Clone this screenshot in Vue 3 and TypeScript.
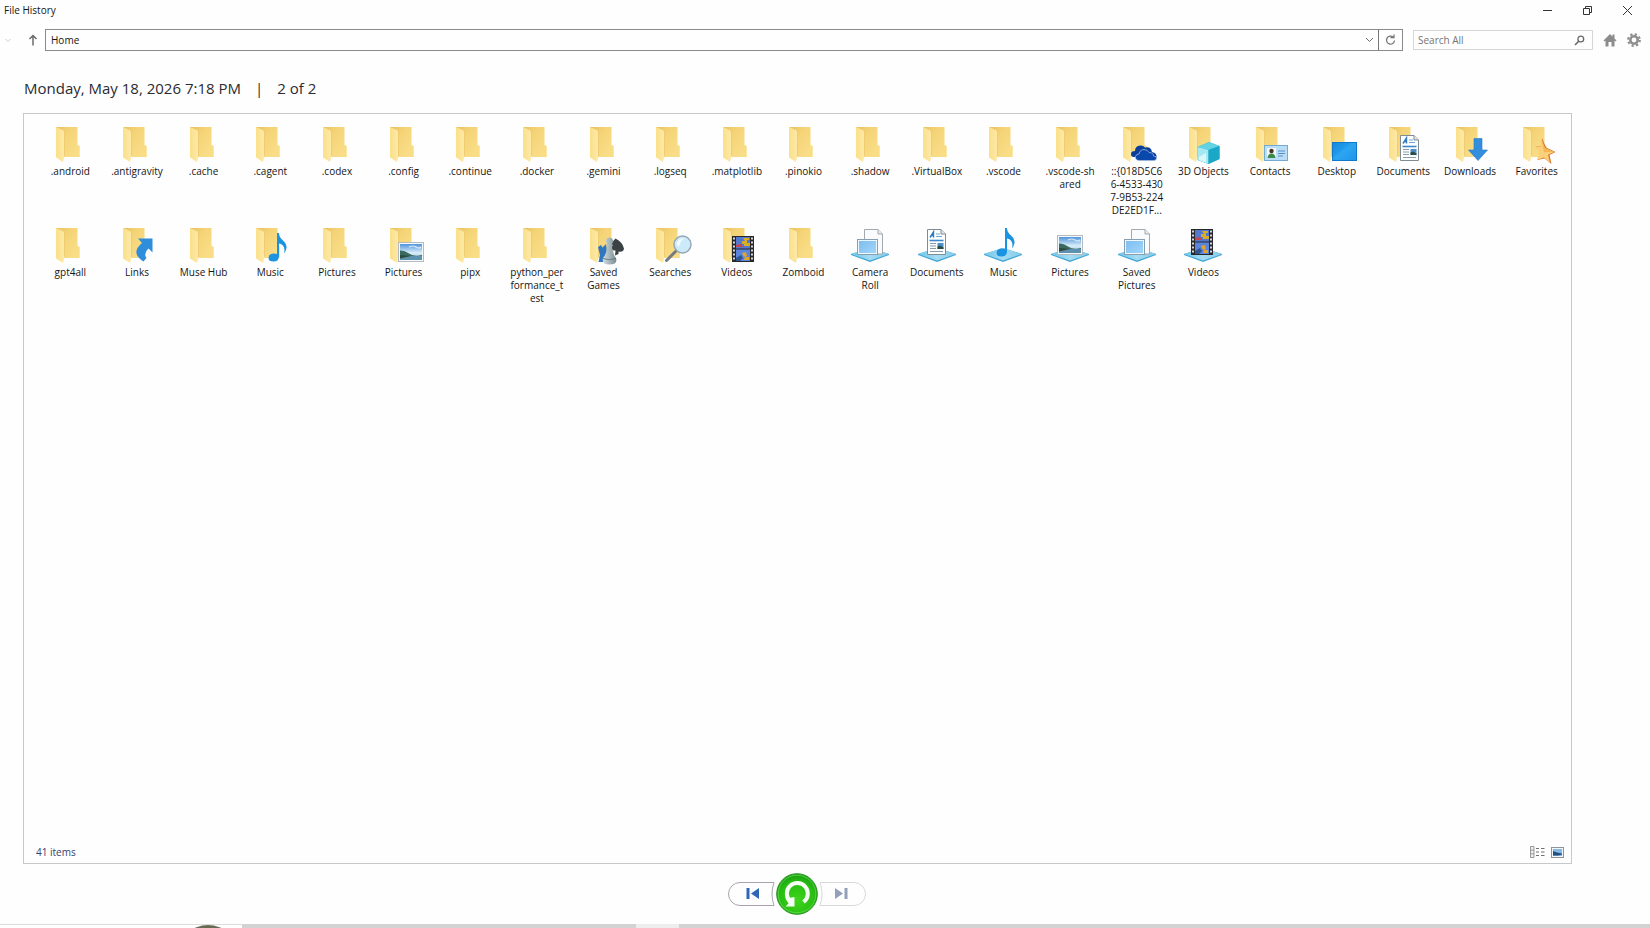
<script setup lang="ts">
import { ref } from 'vue'

interface Entry {
  name: string
  kind: 'folder' | 'library'
  glyph?: string
}

const folder = (name: string, glyph?: string): Entry => ({ name, kind: 'folder', glyph })
const library = (name: string, glyph: string): Entry => ({ name, kind: 'library', glyph })

const entries: Entry[] = [
  folder('.android'),
  folder('.antigravity'),
  folder('.cache'),
  folder('.cagent'),
  folder('.codex'),
  folder('.config'),
  folder('.continue'),
  folder('.docker'),
  folder('.gemini'),
  folder('.logseq'),
  folder('.matplotlib'),
  folder('.pinokio'),
  folder('.shadow'),
  folder('.VirtualBox'),
  folder('.vscode'),
  folder('.vscode-sh\nared'),
  folder('::{018D5C6\n6-4533-430\n7-9B53-224\nDE2ED1F...', 'cloud'),
  folder('3D Objects', 'cube'),
  folder('Contacts', 'contact'),
  folder('Desktop', 'desktop'),
  folder('Documents', 'document'),
  folder('Downloads', 'download'),
  folder('Favorites', 'star'),
  folder('gpt4all'),
  folder('Links', 'link'),
  folder('Muse Hub'),
  folder('Music', 'note'),
  folder('Pictures'),
  folder('Pictures', 'picture'),
  folder('pipx'),
  folder('python_per\nformance_t\nest'),
  folder('Saved\nGames', 'games'),
  folder('Searches', 'search'),
  folder('Videos', 'film'),
  folder('Zomboid'),
  library('Camera\nRoll', 'frames'),
  library('Documents', 'document'),
  library('Music', 'note'),
  library('Pictures', 'picture'),
  library('Saved\nPictures', 'frames'),
  library('Videos', 'film'),
]

// Top-left corner and size of each glyph inside the 40x40 icon, per kind.
const folderBox: Record<string, number[]> = {
  cloud: [14, 20, 26, 16],
  cube: [14, 17, 23, 22],
  contact: [14, 20, 24, 16],
  desktop: [15, 17, 25, 19],
  document: [17, 10, 19, 26],
  download: [18, 13, 20, 23],
  star: [18, 13, 21, 26],
  link: [18, 12, 18, 24],
  note: [18, 7, 19, 29],
  picture: [14, 16, 26, 20],
  games: [14, 11, 26, 28],
  search: [15, 9, 27, 27],
  film: [15, 10, 22, 26],
}
const libraryBox: Record<string, number[]> = {
  frames: [7, 3, 26, 26],
  document: [10, 3, 19, 26],
  note: [13, 2, 19, 29],
  picture: [7, 9, 26, 20],
  film: [8, 3, 22, 26],
}

const box = (e: Entry) => (e.kind === 'folder' ? folderBox : libraryBox)[e.glyph ?? ''] ?? [0, 0, 0, 0]

const path = ref('Home')
const query = ref('')
</script>

<template>
  <div class="window">
    <svg class="sprite" width="0" height="0" aria-hidden="true">
      <defs>
        <linearGradient id="gBack" x1="0" y1="0" x2="1" y2="1">
          <stop offset="0" stop-color="#e8c15f" />
          <stop offset="0.35" stop-color="#f5d477" />
          <stop offset="1" stop-color="#fae08c" />
        </linearGradient>
        <linearGradient id="gLeaf" x1="0" y1="0" x2="1" y2="0">
          <stop offset="0" stop-color="#fbe08a" />
          <stop offset="1" stop-color="#fde9a8" />
        </linearGradient>
        <linearGradient id="gBase" x1="0" y1="0" x2="1" y2="0">
          <stop offset="0" stop-color="#6fc6ea" />
          <stop offset="0.5" stop-color="#a5dcf3" />
          <stop offset="1" stop-color="#7fcbea" />
        </linearGradient>
        <linearGradient id="gDesk" x1="0" y1="0" x2="1" y2="1">
          <stop offset="0" stop-color="#1487dd" />
          <stop offset="0.5" stop-color="#24a0ee" />
          <stop offset="1" stop-color="#1186e0" />
        </linearGradient>
        <linearGradient id="gSky" x1="0" y1="0" x2="0" y2="1">
          <stop offset="0" stop-color="#4f95dc" />
          <stop offset="0.55" stop-color="#d9edf8" />
          <stop offset="1" stop-color="#9cc4dc" />
        </linearGradient>
        <linearGradient id="gFrame" x1="0" y1="0" x2="1" y2="1">
          <stop offset="0" stop-color="#7fbeef" />
          <stop offset="1" stop-color="#a0d5fa" />
        </linearGradient>
        <linearGradient id="gPawn" x1="0" y1="0" x2="1" y2="0">
          <stop offset="0" stop-color="#d3dfe1" />
          <stop offset="1" stop-color="#778b91" />
        </linearGradient>
        <radialGradient id="gGreen" cx="0.5" cy="0.65" r="0.6">
          <stop offset="0" stop-color="#3ed51b" />
          <stop offset="0.75" stop-color="#27bd12" />
          <stop offset="1" stop-color="#1ba412" />
        </radialGradient>
      </defs>

      <symbol id="base-folder" viewBox="0 0 40 40">
        <path d="M6 2H27.500V20L29.500 21V32H13Z" fill="url(#gBack)" />
        <path d="M26 20l3.500 1v11H26z" fill="#f9dd84" />
        <path d="M6 2L13.500 5.500Q14.500 6 14.500 8V31L13 37L6.800 33Q6 32.500 6 31.500Z" fill="url(#gLeaf)" />
        <path d="M13.500 5.500Q14.500 6 14.500 8V31" fill="none" stroke="#edc869" stroke-width="0.800" />
      </symbol>
      <symbol id="base-library" viewBox="0 0 40 40">
        <path d="M1 28L20 22L39 28V29L20 36L1 29Z" fill="#43a6d3" />
        <path d="M1 28L20 22L39 28L20 34.500Z" fill="url(#gBase)" />
      </symbol>

      <symbol id="g-cloud" viewBox="0 0 26 16">
        <path d="M3 12Q0 12 0 9Q0 6 4 6Q4 1 9 0.500Q12 0 14 2.500Q20 1 21 7Q26 8 25.500 12Z" fill="#0a3f9c" />
        <path d="M8 15.500Q4 15 4.500 11.500Q5 9 8 9Q9 4.500 13 4.500Q16.500 4.500 18 7.500Q22.500 7.500 22.500 11Q26 11 25.500 13.500Q25 15.500 23 15.500Z" fill="#0b48ab" stroke="#9cb8df" stroke-width="0.800" />
      </symbol>
      <symbol id="g-cube" viewBox="0 0 23 22">
        <path d="M12 0L22.500 4V17L11.500 22L0.500 18V5Z" fill="#25b4cf" />
        <path d="M12 0L22.500 4L11.500 8L0.500 5Z" fill="#63d3e4" />
        <path d="M0.500 5L11.500 8V22L0.500 18Z" fill="#a4e8f2" />
        <path d="M2 15L9 11V20.500L2 18Z" fill="#d9f7fa" />
        <path d="M11.500 8L22.500 4V17L11.500 22Z" fill="#1ba7c6" />
      </symbol>
      <symbol id="g-contact" viewBox="0 0 24 16">
        <rect x="0.500" y="0.500" width="23" height="15" fill="#b9def6" stroke="#74abd2" />
        <rect x="3" y="3" width="9" height="10" fill="#f3f8f6" />
        <circle cx="7.500" cy="6" r="2.200" fill="#4a3528" />
        <path d="M3.500 13Q4 8.500 7.500 8.500Q11 8.500 11.500 13Z" fill="#3c8b48" />
        <path d="M14 6h7M14 8.500h7M14 11h5" stroke="#5a8fc8" stroke-width="1" />
      </symbol>
      <symbol id="g-desktop" viewBox="0 0 25 19">
        <rect x="0.500" y="0.500" width="24" height="18" fill="url(#gDesk)" stroke="#1179cb" />
        <path d="M1 16L18 1H24V18H1Z" fill="#36adf4" opacity="0.400" />
      </symbol>
      <symbol id="g-document" viewBox="0 0 19 26">
        <path d="M0.500 0.500H14L18.500 5V25.500H0.500Z" fill="#fdfefe" stroke="#808b93" />
        <path d="M14 0.500V5H18.500" fill="#e1e5e8" stroke="#808b93" />
        <path d="M3 8.500L6.500 3V8.500M4.500 6.500H6.500" fill="none" stroke="#2f7ac1" stroke-width="1.400" />
        <path d="M9 5h4M9 7.500h6" stroke="#6ba8df" />
        <path d="M2.500 11.500h14" stroke="#3f87cc" stroke-width="1.600" />
        <path d="M3 14.500h6M3 17h6M3 19.500h6M3 22.500h13" stroke="#8c9aa5" />
        <rect x="10.500" y="14" width="6" height="6" fill="#4d8ec8" />
        <path d="M10.500 20V17.500L13 16.500L16.500 18.500V20Z" fill="#2c4e42" />
      </symbol>
      <symbol id="g-download" viewBox="0 0 20 23">
        <path d="M6 0.500H14V12H19.500L10 22.500L0.500 12H6Z" fill="#338fdd" stroke="#2379c5" stroke-width="0.600" />
      </symbol>
      <symbol id="g-star" viewBox="0 0 21 26">
        <path d="M7 0L11 9.500L20.500 14L14.500 17L16.500 26L9.500 20.500L2.500 22L5 14L0.500 8.500L6.500 8.500Z" fill="#d8742c" />
        <path d="M6.500 1L9.800 10L19 14L13 16.800L15 25L9 19.500L2 22L4.500 14L0 8.500L6 8.800Z" fill="#fad07a" />
        <path d="M6.500 1L9.800 10L19 14L9 14Z" fill="#f4b552" />
      </symbol>
      <symbol id="g-link" viewBox="0 0 18 24">
        <path d="M3 0.500H17.500V14.500L13.500 10.500Q8.500 15 11.500 20L8.500 23.500Q-5 15 7 5Z" fill="#2f8edb" />
        <path d="M13.500 11Q9 15 11 19.500L17 18Q17 14 13.500 11Z" fill="#f7fbfe" />
      </symbol>
      <symbol id="g-note" viewBox="0 0 19 29">
        <path d="M9 0H11Q11 4 14.500 7Q19 11 18.500 15Q18 18 16 20.500Q18 12 11 10.500V23Q11 28.500 5.500 28.500Q0.500 28.500 0.500 25Q0.500 20.500 6 20.500Q8 20.500 9 21Z" fill="#1b93e0" />
      </symbol>
      <symbol id="g-picture" viewBox="0 0 26 20">
        <rect x="0.500" y="0.500" width="25" height="19" fill="#f7fafc" stroke="#b4babf" />
        <rect x="2" y="2" width="22" height="16" fill="url(#gSky)" />
        <path d="M2 8.500Q6 8 11 11.500T24 13V14H2Z" fill="#3b6a62" />
        <path d="M2 14H24V18H2Z" fill="#5d92ae" />
        <path d="M2 13L13 14L2 16.500Z" fill="#2d4a3d" />
        <path d="M11 5q4-2 7 0t5 0" fill="none" stroke="#fff" stroke-width="1.200" opacity="0.700" />
      </symbol>
      <symbol id="g-games" viewBox="0 0 26 28">
        <path d="M0 10L3 8L4.500 10.500L8 7L9.500 17L7 25H0.500L2 18Z" fill="#2f78bf" />
        <path d="M17.500 1.500Q13 6 13 10.500Q14 14 17.500 13.500L17 18.500L20.500 17L20.500 14.500Q25.500 15.500 26 11.500Q24.500 5 17.500 1.500Z" fill="#3b4144" />
        <path d="M11.500 0.500A3.500 3.500 0 0 1 14 6.500L15 8.500L14 10Q14.500 17 18 21Q20 27.500 11.500 27.500Q3.500 27.500 5 21Q8.500 17 9 10L8 8.500L9 6.500A3.500 3.500 0 0 1 11.500 0.500Z" fill="url(#gPawn)" />
        <path d="M5 21.500Q11 24 18 21.500" fill="none" stroke="#5b7077" stroke-width="0.800" />
      </symbol>
      <symbol id="g-search" viewBox="0 0 27 27">
        <path d="M1.500 25.500L11 16" stroke="#757b80" stroke-width="3" stroke-linecap="round" />
        <circle cx="17.500" cy="9.500" r="8.500" fill="#cdeafa" stroke="#94a6b1" stroke-width="1.400" />
        <path d="M11.500 9Q13 3 19 3.500Q15 6 14 12Z" fill="#f2fbff" />
      </symbol>
      <symbol id="g-film" viewBox="0 0 22 26">
        <rect width="22" height="26" fill="#28282b" />
        <rect x="4" y="1" width="14" height="11.500" fill="#5378cd" />
        <rect x="4" y="13.500" width="14" height="11.500" fill="#5b85dc" />
        <path d="M11 2h6v2h-2v3h3v3h-6V8h-2V5h3z" fill="#d9ae24" />
        <path d="M4 9l5-1 2 3H4z" fill="#c64350" />
        <path d="M10 17l4-1 1 4-3 1zM13 21h4v3h-5z" fill="#e1a629" />
        <path d="M4 22l5-3 2 3-3 3H4z" fill="#31538f" />
        <path d="M2 1.500V25M20 1.500V25" stroke="#d4d7de" stroke-width="2" stroke-dasharray="2 2" />
      </symbol>
      <symbol id="g-frames" viewBox="0 0 26 26">
        <path d="M7.500 0.500H21L25.500 5V25H7.500Z" fill="#fafbfc" stroke="#a3a9ae" />
        <path d="M21 0.500V5H25.500" fill="#e9ebed" stroke="#a3a9ae" />
        <rect x="0.500" y="10.500" width="20" height="15" fill="#eef7fd" stroke="#879fb0" />
        <rect x="2" y="12" width="17" height="12" fill="url(#gFrame)" />
      </symbol>
    </svg>

    <header class="titlebar">
      <h1 class="caption">File History</h1>
      <div class="controls">
        <button type="button" aria-label="Minimize">
          <svg width="11" height="11" viewBox="0 0 11 11"><path d="M1 5.500h9" /></svg>
        </button>
        <button type="button" aria-label="Restore">
          <svg width="11" height="11" viewBox="0 0 11 11"><path d="M1.500 3.500h6v6h-6zM3.500 3.500v-2h6v6h-2" /></svg>
        </button>
        <button type="button" aria-label="Close">
          <svg width="11" height="11" viewBox="0 0 11 11"><path d="M1 1l9 9M10 1l-9 9" /></svg>
        </button>
      </div>
    </header>

    <nav class="toolbar">
      <button class="plain recent" type="button" aria-label="Recent locations">
        <svg width="8" height="8" viewBox="0 0 8 8"><path d="M1.500 3l2.500 2.500L6.500 3" fill="none" stroke="#d0d0d0" /></svg>
      </button>
      <button class="plain up" type="button" aria-label="Up">
        <svg width="10" height="12" viewBox="0 0 10 12"><path d="M5 11.500V1.500M1.500 5L5 1.500L8.500 5" fill="none" stroke="#6b6b6b" stroke-width="1.500" /></svg>
      </button>
      <div class="address">
        <input v-model="path" type="text" aria-label="Address" />
        <button class="plain drop" type="button" aria-label="Previous locations">
          <svg width="9" height="8" viewBox="0 0 9 8"><path d="M1 2l3.500 3.500L8 2" fill="none" stroke="#6b6b6b" /></svg>
        </button>
        <button class="plain refresh" type="button" aria-label="Refresh">
          <svg width="11" height="12" viewBox="0 0 11 12">
            <path d="M8.200 3.200A4 4 0 1 0 9.500 6.500" fill="none" stroke="#777" stroke-width="1.300" />
            <path d="M5.500 3.500h3.500V0.500" fill="none" stroke="#777" stroke-width="1.300" />
          </svg>
        </button>
      </div>
      <div class="search">
        <input v-model="query" type="text" placeholder="Search All" aria-label="Search All" />
        <button class="plain find" type="button" aria-label="Search">
          <svg width="11" height="11" viewBox="0 0 11 11">
            <circle cx="6.800" cy="4" r="2.900" fill="none" stroke="#686868" stroke-width="1.300" />
            <path d="M4.700 6.200L1 10" stroke="#686868" stroke-width="1.600" />
          </svg>
        </button>
      </div>
      <button class="plain tool" type="button" aria-label="Home">
        <svg width="14" height="14" viewBox="0 0 14 14"><path d="M7 1L0.500 7.500L1.500 8.500L2.500 7.600V13.500H5.500V9H8.500V13.500H11.500V7.600L12.500 8.500L13.500 7.500L11.500 5.500V1.500H9.500V3.500Z" fill="#8c8c8c" /></svg>
      </button>
      <button class="plain tool" type="button" aria-label="Options">
        <svg width="14" height="14" viewBox="0 0 14 14">
          <circle cx="7" cy="7" r="3.700" fill="none" stroke="#8f8f8f" stroke-width="2.600" />
          <circle cx="7" cy="7" r="5.800" fill="none" stroke="#8f8f8f" stroke-width="2.200" stroke-dasharray="2.278 2.278" />
        </svg>
      </button>
    </nav>

    <h2 class="stamp"><span>Monday, May 18, 2026 7:18 PM</span><span>|</span><span>2 of 2</span></h2>

    <main class="panel">
      <ul class="grid">
        <li v-for="(entry, i) in entries" :key="i">
          <button class="tile" type="button">
            <svg class="icon" width="40" height="40" viewBox="0 0 40 40" aria-hidden="true">
              <use :href="'#base-' + entry.kind" width="40" height="40" />
              <use
                v-if="entry.glyph"
                :href="'#g-' + entry.glyph"
                :x="box(entry)[0]"
                :y="box(entry)[1]"
                :width="box(entry)[2]"
                :height="box(entry)[3]"
              />
            </svg>
            <span class="label">{{ entry.name }}</span>
          </button>
        </li>
      </ul>
      <footer class="status">
        <span>{{ entries.length }} items</span>
        <div class="views">
          <button class="plain" type="button" aria-label="Details view">
            <svg width="15" height="12" viewBox="0 0 15 12">
              <path d="M0.500 0.500h3.500v11H0.500zM0.500 4.200H4M0.500 7.800H4" fill="#eee" stroke="#999" />
              <path d="M6 2.500h3M11 2.500h3.500M6 6h3M11 6h3.500M6 9.500h3M11 9.500h3.500" stroke="#707070" />
            </svg>
          </button>
          <button class="plain" type="button" aria-label="Large icons view">
            <svg width="13" height="11" viewBox="0 0 13 11">
              <rect x="0.500" y="0.500" width="12" height="10" fill="#f4f7fa" stroke="#8e9499" />
              <rect x="2" y="2" width="9" height="7" fill="#86b9e6" />
              <path d="M2 4L6 5.500L11 6.500V7.500L7 8.500H2Z" fill="#244f7f" />
            </svg>
          </button>
        </div>
      </footer>
    </main>

    <div class="player">
      <button class="plain" type="button" aria-label="Previous version">
        <svg width="47" height="24" viewBox="0 0 47 24">
          <path d="M12 0.500H46Q42 12 46 23.500H12A11.500 11.500 0 0 1 12 0.500Z" fill="#fefefe" stroke="#aaa2ae" />
          <path d="M18.500 6h3v11h-3zM31 6v11l-8-5.500z" fill="#2e68b4" />
        </svg>
      </button>
      <button class="plain" type="button" aria-label="Restore to original location">
        <svg width="42" height="42" viewBox="0 0 42 42">
          <circle cx="21" cy="21" r="20.300" fill="url(#gGreen)" stroke="#27901f" />
          <circle cx="21" cy="21" r="18.800" fill="none" stroke="#62d951" stroke-width="0.800" />
          <path d="M14.500 28.500A10.500 10.500 0 1 1 27.500 29" fill="none" stroke="#f6fdf4" stroke-width="4" />
          <path d="M9.500 25.500L18.500 24V33.500H9.500L12.500 30.500Z" fill="#f6fdf4" />
        </svg>
      </button>
      <button class="plain" type="button" aria-label="Next version" disabled>
        <svg width="47" height="24" viewBox="0 0 47 24">
          <path d="M35 0.500H1Q5 12 1 23.500H35A11.500 11.500 0 0 0 35 0.500Z" fill="#fefefe" stroke="#d8d8da" />
          <path d="M25.500 6h3v11h-3zM16 6v11l8-5.500z" fill="#93a0b9" />
        </svg>
      </button>
    </div>

    <div class="edge" aria-hidden="true">
      <div class="edge-light"><i class="disc"></i></div>
      <div class="edge-mid"></div>
      <div class="edge-tab"></div>
      <div class="edge-rest"></div>
    </div>
  </div>
</template>

<style>
body {
  background: #fefefe;
}
</style>

<style scoped>
.window {
  position: relative;
  display: flex;
  flex-direction: column;
  min-height: 100vh;
  overflow: hidden;
  background: #fefefe;
  color: #151515;
  font-family: 'Open Sans', 'Noto Sans', sans-serif;
  font-size: 10px;
}
.window * {
  box-sizing: border-box;
}
.sprite {
  position: absolute;
}
button,
input {
  margin: 0;
  padding: 0;
  border: 0;
  background: none;
  color: inherit;
  font: inherit;
}
button svg {
  display: block;
}
.plain {
  display: flex;
  align-items: center;
  justify-content: center;
}

.titlebar {
  display: flex;
  align-items: center;
  justify-content: space-between;
  height: 20px;
  padding: 0 3px 0 4px;
}
.caption {
  margin: 0;
  font-size: 10px;
  font-weight: 400;
  line-height: 20px;
}
.controls {
  display: flex;
}
.controls button {
  display: flex;
  align-items: center;
  justify-content: center;
  width: 40px;
  height: 18px;
}
.controls path {
  fill: none;
  stroke: #333;
  stroke-width: 1;
}

.toolbar {
  display: flex;
  align-items: center;
  height: 22px;
  margin-top: 9px;
  padding-right: 9px;
}
.recent {
  width: 16px;
  height: 22px;
}
.up {
  width: 29px;
  height: 22px;
  padding-left: 4px;
}
.address {
  display: flex;
  flex: 1;
  height: 22px;
  border: 1px solid #8b8b8b;
}
.address input {
  flex: 1;
  min-width: 0;
  padding-left: 5px;
}
.drop {
  width: 17px;
}
.refresh {
  width: 24px;
  border-left: 1px solid #777;
}
.search {
  display: flex;
  width: 180px;
  height: 20px;
  margin: 0 10px;
  border: 1px solid #d6d6d6;
}
.search input {
  flex: 1;
  min-width: 0;
  padding-left: 4px;
}
.search input::placeholder {
  color: #747474;
  opacity: 1;
}
.find {
  width: 26px;
}
.tool {
  width: 14px;
  height: 20px;
}
.tool + .tool {
  margin-left: 10px;
}

.stamp {
  display: flex;
  gap: 14px;
  margin: 26px 0 0 24px;
  font-size: 15px;
  font-weight: 400;
  line-height: 22px;
  color: #2b2b33;
}

.panel {
  display: flex;
  flex: 1;
  flex-direction: column;
  margin: 14px 78px 0 23px;
  border: 1px solid #c6c9cb;
}
.grid {
  display: grid;
  flex: 1;
  grid-template-columns: repeat(auto-fill, minmax(66px, 1fr));
  align-content: start;
  row-gap: 9px;
  margin: 0;
  padding: 11px 1px 0 13px;
  list-style: none;
}
.tile {
  display: flex;
  flex-direction: column;
  align-items: center;
  width: 100%;
}
.icon {
  overflow: visible;
}
.label {
  line-height: 13px;
  white-space: pre;
  text-align: center;
}
.status {
  display: flex;
  align-items: center;
  justify-content: space-between;
  height: 22px;
  padding: 0 7px 0 12px;
  color: #35406e;
}
.views {
  display: flex;
  align-items: center;
  gap: 6px;
}

.player {
  display: flex;
  align-items: center;
  justify-content: center;
  gap: 1px;
  height: 60px;
  margin-right: 56px;
}

.edge {
  display: flex;
  height: 4px;
  overflow: hidden;
}
.edge-light {
  width: 242px;
  border-top: 1px solid #dcdcdc;
}
.disc {
  display: block;
  width: 60px;
  height: 60px;
  margin-left: 178px;
  border-radius: 50%;
  background: #686c55;
}
.edge-mid {
  width: 394px;
  background: #d3d3d3;
}
.edge-tab {
  width: 43px;
  background: #eee;
}
.edge-rest {
  flex: 1;
  background: #d3d3d3;
}
</style>
